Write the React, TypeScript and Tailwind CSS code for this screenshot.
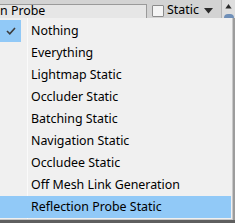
import React from "react";

const items = [
  "Nothing",
  "Everything",
  "Lightmap Static",
  "Occluder Static",
  "Batching Static",
  "Navigation Static",
  "Occludee Static",
  "Off Mesh Link Generation",
  "Reflection Probe Static",
];

function Check() {
  return (
    <svg width="10" height="8" viewBox="0 0 10 8" className="text-[#3c3c3c]">
      <path d="M1 4 L3.8 6.8 L9 1" fill="none" stroke="currentColor" strokeWidth="1.6" />
    </svg>
  );
}

export default function App() {
  return (
    <div
      className="w-[235px] h-[223px] overflow-hidden bg-[#5f5f5f] flex flex-col text-[12.4px] text-black"
      style={{ fontFamily: '"Noto Sans", "Liberation Sans", sans-serif' }}
    >
      {/* inspector header strip */}
      <div className="h-[18px] flex bg-[#d3d3d3]">
        <div className="w-[147px] mt-[4px] h-[14px] border border-l-0 border-b-0 border-[#9a9a9a] bg-[#e6e6e6] flex items-center">
          <span className="leading-none whitespace-nowrap">n Probe</span>
        </div>
        <div className="w-[5px]" />
        <div className="mt-[5px] w-[12px] h-[12px] border border-[#8c8c8c] bg-[#f4f4f4] rounded-[1px]" />
        <span className="ml-[3px] mt-[3px] leading-[14px]">Static</span>
        <svg width="9" height="6" viewBox="0 0 9 6" className="ml-[5px] mt-[8px]">
          <path d="M0 0 H9 L4.5 5.5 Z" fill="#2a2a2a" />
        </svg>
        <div className="ml-auto w-[14px] bg-[#dedede] border-l border-[#b5b5b5] flex flex-col items-center">
          <svg width="7" height="5" viewBox="0 0 7 5" className="mt-[4px]">
            <path d="M3.5 0 L7 5 H0 Z" fill="#2a2a2a" />
          </svg>
          <div className="mt-[5px] w-[10px] h-[5px] rounded-t-full bg-[#6f8fb8]" />
        </div>
      </div>

      {/* dropdown menu */}
      <div className="flex">
        <div className="w-[233px] bg-[#f0f0f0] border-r border-b border-[#c8c8c8] pt-[2px] pb-[1px] relative">
          <div className="absolute left-[27px] top-0 bottom-0 w-px bg-[#fafafa]" />
          {items.map((label, i) => (
            <div
              key={label}
              className={
                "relative h-[22px] flex items-center " +
                (i === items.length - 1 ? "bg-[#91c9f7] mr-px" : "")
              }
            >
              <div
                className={
                  "w-[21px] h-[22px] flex items-center justify-center " +
                  (i === 0 ? "bg-[#91c9f7]" : "")
                }
              >
                {i === 0 && <Check />}
              </div>
              <span className="ml-[10px] whitespace-nowrap leading-none">{label}</span>
            </div>
          ))}
        </div>
        <div className="flex-1 bg-[#9c9c9c]" />
      </div>
    </div>
  );
}
